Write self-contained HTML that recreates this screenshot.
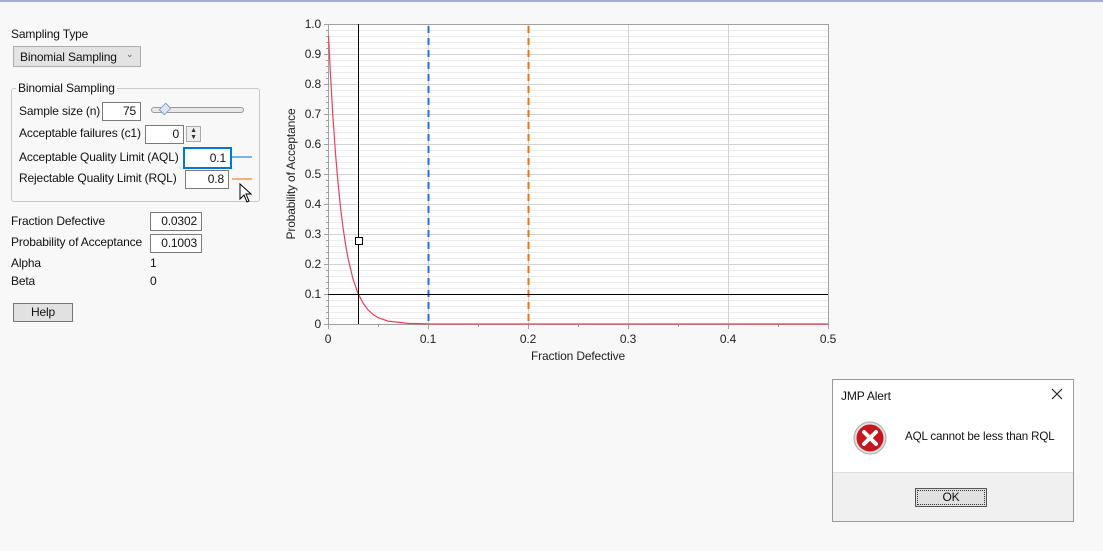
<!DOCTYPE html>
<html><head><meta charset="utf-8"><style>
*{margin:0;padding:0;box-sizing:border-box}
body{width:1103px;height:551px;background:#f8f8f8;font-family:"Liberation Sans",sans-serif;font-size:12px;letter-spacing:-0.15px;color:#111;position:relative;overflow:hidden}
.a{position:absolute;white-space:nowrap}
.box{position:absolute;background:#fff;border:1px solid #7a7a7a;text-align:right;padding-right:4px;line-height:16px}
</style></head><body>
<div class="a" style="left:0;top:0;width:1103px;height:2px;background:#a8acd0"></div>
<div class="a" style="left:11px;top:27px">Sampling Type</div>
<div class="a" style="left:13px;top:46px;width:128px;height:21px;background:#e3e3e3;border:1px solid #adadad;padding:3px 0 0 6px">Binomial Sampling <span style="position:absolute;left:112px;top:2px;font-size:9px;color:#555">&#8964;</span></div>
<div class="a" style="left:11px;top:88px;width:249px;height:114px;border:1px solid #c8c8c8;border-radius:3px"></div>
<div class="a" style="left:16px;top:81px;background:#f8f8f8;padding:0 2px">Binomial Sampling</div>
<div class="a" style="left:19px;top:104px">Sample size (n)</div>
<div class="box" style="left:102px;top:102px;width:39px;height:19px">75</div>
<div class="a" style="left:151px;top:107px;width:93px;height:6px;border:1px solid #999;border-radius:3px;background:#e8e8e8"></div>
<div class="a" style="left:160px;top:104px;width:10px;height:10px;transform:rotate(45deg) scaleX(.8);background:#dce7f5;border:1px solid #7a9cc8"></div>
<div class="a" style="left:19px;top:126px">Acceptable failures (c1)</div>
<div class="box" style="left:145px;top:125px;width:39px;height:19px">0</div>
<div class="a" style="left:186px;top:126px;width:15px;height:16px;border:1px solid #aaa;background:#eee;font-size:7px;line-height:7px;text-align:center;color:#333">&#9650;<br>&#9660;</div>
<div class="a" style="left:19px;top:150px">Acceptable Quality Limit (AQL)</div>
<div class="box" style="left:183px;top:147px;width:49px;height:22px;border:2px solid #0078d7;line-height:18px">0.1</div>
<div class="a" style="left:232px;top:156px;width:20px;height:2px;background:#7ab3f0"></div>
<div class="a" style="left:19px;top:171px">Rejectable Quality Limit (RQL)</div>
<div class="box" style="left:185px;top:170px;width:44px;height:19px">0.8</div>
<div class="a" style="left:232px;top:178px;width:20px;height:2px;background:#f5b080"></div>
<svg class="a" style="left:239px;top:183px" width="16" height="22"><path d="M1 1 L1 16 L5 12 L8 19 L10 18 L7 11 L12 11 Z" fill="#fff" stroke="#000" stroke-width="1"/></svg>
<div class="a" style="left:11px;top:214px">Fraction Defective</div>
<div class="box" style="left:150px;top:212px;width:52px;height:19px">0.0302</div>
<div class="a" style="left:11px;top:235px">Probability of Acceptance</div>
<div class="box" style="left:150px;top:234px;width:52px;height:19px">0.1003</div>
<div class="a" style="left:11px;top:256px">Alpha</div><div class="a" style="left:150px;top:256px">1</div>
<div class="a" style="left:11px;top:274px">Beta</div><div class="a" style="left:150px;top:274px">0</div>
<div class="a" style="left:13px;top:303px;width:60px;height:19px;background:#e1e1e1;border:1px solid #777;text-align:center;line-height:17px">Help</div>

<svg class="a" style="left:0;top:0" width="1103" height="551" font-family="Liberation Sans,sans-serif" font-size="12">
<rect x="328" y="24" width="500" height="300" fill="#fff"/>
<g stroke="#ececec" stroke-width="1">
<path d="M328 30.5H828M328 36.5H828M328 42.5H828M328 48.5H828M328 60.5H828M328 66.5H828M328 72.5H828M328 78.5H828M328 90.5H828M328 96.5H828M328 102.5H828M328 108.5H828M328 120.5H828M328 126.5H828M328 132.5H828M328 138.5H828M328 150.5H828M328 156.5H828M328 162.5H828M328 168.5H828M328 180.5H828M328 186.5H828M328 192.5H828M328 198.5H828M328 210.5H828M328 216.5H828M328 222.5H828M328 228.5H828M328 240.5H828M328 246.5H828M328 252.5H828M328 258.5H828M328 270.5H828M328 276.5H828M328 282.5H828M328 288.5H828M328 300.5H828M328 306.5H828M328 312.5H828M328 318.5H828"/>
</g>
<g stroke="#d2d2d2" stroke-width="1">
<path d="M328 54.5H828M328 84.5H828M328 114.5H828M328 144.5H828M328 174.5H828M328 204.5H828M328 234.5H828M328 264.5H828M328 294.5H828M428.5 24V324M528.5 24V324M628.5 24V324M728.5 24V324"/>
</g>
<rect x="328.5" y="24.5" width="500" height="300" fill="none" stroke="#a0a0a0"/>
<g stroke="#a0a0a0">
<path d="M324 24.5H328M324 54.5H328M324 84.5H328M324 114.5H328M324 144.5H328M324 174.5H328M324 204.5H328M324 234.5H328M324 264.5H328M324 294.5H328M324 324.5H328"/>
<path d="M326 30.5H328M326 36.5H328M326 42.5H328M326 48.5H328M326 60.5H328M326 66.5H328M326 72.5H328M326 78.5H328M326 90.5H328M326 96.5H328M326 102.5H328M326 108.5H328M326 120.5H328M326 126.5H328M326 132.5H328M326 138.5H328M326 150.5H328M326 156.5H328M326 162.5H328M326 168.5H328M326 180.5H328M326 186.5H328M326 192.5H328M326 198.5H328M326 210.5H328M326 216.5H328M326 222.5H328M326 228.5H328M326 240.5H328M326 246.5H328M326 252.5H328M326 258.5H328M326 270.5H328M326 276.5H328M326 282.5H328M326 288.5H328M326 300.5H328M326 306.5H328M326 312.5H328M326 318.5H328"/>
<path d="M328.5 324V329M428.5 324V329M528.5 324V329M628.5 324V329M728.5 324V329M828.5 324V329M378.5 324V327M478.5 324V327M578.5 324V327M678.5 324V327M778.5 324V327"/>
</g>
<line x1="428.5" y1="26" x2="428.5" y2="324" stroke="#2a6ef0" stroke-width="2" stroke-dasharray="7,5"/>
<line x1="528.5" y1="26" x2="528.5" y2="324" stroke="#e8760e" stroke-width="2" stroke-dasharray="7,5"/>
<polyline fill="none" stroke="#e8405a" stroke-width="1.2" points="328.5,36 330.5,75.3 333,118.2 335.5,153.4 338,182.7 340.5,207.3 343,227.4 345.5,244.2 348,258 353,279.1 358,293.4 363,303 368,309.9 373,314.5 378,317.6 388,321.1 408,323.4 428,323.9 828,324"/>
<line x1="358.5" y1="24" x2="358.5" y2="324" stroke="#000"/>
<line x1="328" y1="294.5" x2="828" y2="294.5" stroke="#000"/>
<rect x="355.5" y="237.5" width="7" height="7" fill="#fff" stroke="#000"/>
<g text-anchor="end" fill="#222">
<text x="321" y="28">1.0</text><text x="321" y="58">0.9</text><text x="321" y="88">0.8</text><text x="321" y="118">0.7</text><text x="321" y="148">0.6</text><text x="321" y="178">0.5</text><text x="321" y="208">0.4</text><text x="321" y="238">0.3</text><text x="321" y="268">0.2</text><text x="321" y="298">0.1</text><text x="321" y="328">0</text>
</g>
<g text-anchor="middle" fill="#222">
<text x="328" y="343">0</text><text x="428" y="343">0.1</text><text x="528" y="343">0.2</text><text x="628" y="343">0.3</text><text x="728" y="343">0.4</text><text x="828" y="343">0.5</text>
<text x="578" y="360">Fraction Defective</text>
<text transform="translate(295,174) rotate(-90)">Probability of Acceptance</text>
</g>
</svg>

<div class="a" style="left:832px;top:379px;width:242px;height:143px;border:1px solid #999;background:#f0f0f0">
<div class="a" style="left:0;top:0;width:240px;height:93px;background:#fff;border-bottom:1px solid #e0e0e0"></div>
<div class="a" style="left:8px;top:9px">JMP Alert</div>
<svg class="a" style="left:218px;top:8px" width="12" height="12"><path d="M1 1L11 11M11 1L1 11" stroke="#222" stroke-width="1.2"/></svg>
<svg class="a" style="left:20px;top:41px" width="34" height="34"><circle cx="17" cy="17" r="16" fill="#ddd" stroke="#aaa"/><circle cx="17" cy="17" r="13.5" fill="#c8161e"/><path d="M11 11L23 23M23 11L11 23" stroke="#fff" stroke-width="4" stroke-linecap="round"/></svg>
<div class="a" style="left:72px;top:50px;font-size:11.6px">AQL cannot be less than RQL</div>
<div class="a" style="left:82px;top:108px;width:72px;height:19px;background:#e1e1e1;border:1px solid #555;outline:1px dotted #333;outline-offset:-3px;text-align:center;line-height:17px">OK</div>
</div>
</body></html>
